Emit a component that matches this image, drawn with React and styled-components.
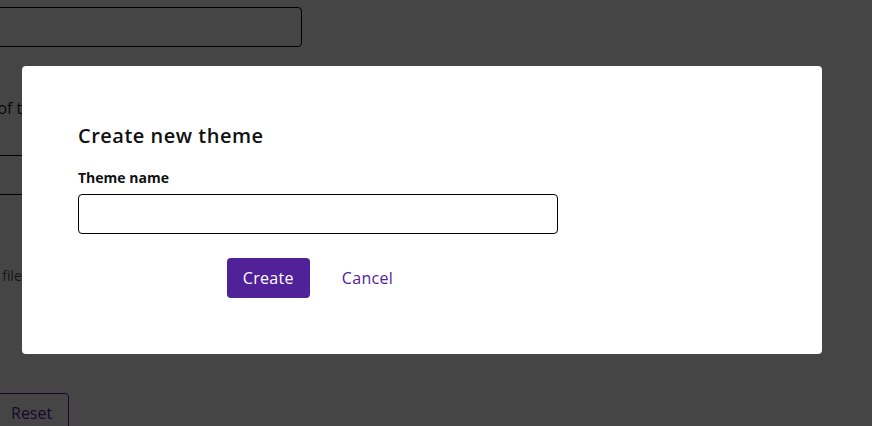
import React from "react"
import styled, { createGlobalStyle } from "styled-components"

const purple = "#51219a"

const GlobalStyle = createGlobalStyle`
  html, body {
    margin: 0;
    padding: 0;
    background: #ffffff;
    font-family: "Open Sans", "Noto Sans", sans-serif;
    color: #222222;
  }
`

// the settings page that sits behind the dialog
const Page = styled.div`
  display: flex;
  flex-direction: column;
  align-items: flex-start;
  margin-left: -240px;
  padding-top: 7px;
  width: 542px;
`

const PageInput = styled.div`
  box-sizing: border-box;
  width: ${props => props.width || 542}px;
  height: 40px;
  border: 1px solid #000000;
  border-radius: 4px;
  margin-top: ${props => props.top || 0}px;
`

const PageText = styled.p`
  margin: ${props => props.top || 0}px 0 0 ${props => props.shift || 0}px;
  font-size: ${props => props.size || 16}px;
  line-height: 22px;
  color: ${props => props.muted ? "#555555" : "#222222"};
  white-space: nowrap;
`

const OutlineButton = styled.button`
  box-sizing: border-box;
  margin-top: ${props => props.top || 0}px;
  margin-left: ${props => props.shift || 0}px;
  height: 40px;
  padding: 0 16px;
  border: 1px solid ${purple};
  border-radius: 4px;
  background: #ffffff;
  color: ${purple};
  font-family: inherit;
  font-size: 16px;
`

const Overlay = styled.div`
  position: fixed;
  inset: 0;
  background: rgba(0, 0, 0, 0.73);
  display: flex;
  align-items: flex-start;
  padding: 66px 0 0 22px;
`

const Dialog = styled.div`
  box-sizing: border-box;
  width: 800px;
  padding: 56px;
  background: #ffffff;
  border-radius: 4px;
  display: flex;
  flex-direction: column;
`

const Title = styled.h2`
  margin: 0;
  font-size: 20px;
  font-weight: 600;
  line-height: 27px;
  color: #111111;
  letter-spacing: 0.5px;
`

const Form = styled.form`
  display: flex;
  flex-direction: column;
  width: 480px;
  margin-top: 19px;
`

const Label = styled.label`
  font-size: 14px;
  font-weight: 700;
  line-height: 19px;
  color: #111111;
`

const Input = styled.input`
  box-sizing: border-box;
  margin-top: 7px;
  width: 480px;
  height: 40px;
  border: 1px solid #000000;
  border-radius: 4px;
  padding: 0 12px;
  font-family: inherit;
  font-size: 16px;
  outline: 0;
`

const Actions = styled.div`
  display: flex;
  justify-content: center;
  gap: 16px;
  margin-top: 24px;
`

const Button = styled.button`
  height: 40px;
  padding: 0 16px;
  border: 0;
  border-radius: 4px;
  background: ${props => props.primary ? purple : "transparent"};
  color: ${props => props.primary ? "#ffffff" : purple};
  font-family: inherit;
  font-size: 16px;
  letter-spacing: 0.3px;
  cursor: pointer;
`

const App = () => {
  return (
    <>
      <GlobalStyle />

      <Page>
        <PageInput />
        <PageText top={50} shift={118}>Enter the name of the theme</PageText>
        <PageInput top={36} />
        <PageText top={70} size={14} muted shift={180}>Upload a file</PageText>
        <OutlineButton top={106} shift={234}>Reset</OutlineButton>
      </Page>

      <Overlay>
        <Dialog>
          <Title>Create new theme</Title>
          <Form onSubmit={e => e.preventDefault()}>
            <Label htmlFor="theme-name">Theme name</Label>
            <Input id="theme-name" type="text" />
            <Actions>
              <Button primary type="submit">Create</Button>
              <Button type="button">Cancel</Button>
            </Actions>
          </Form>
        </Dialog>
      </Overlay>
    </>
  )
}

export default App
